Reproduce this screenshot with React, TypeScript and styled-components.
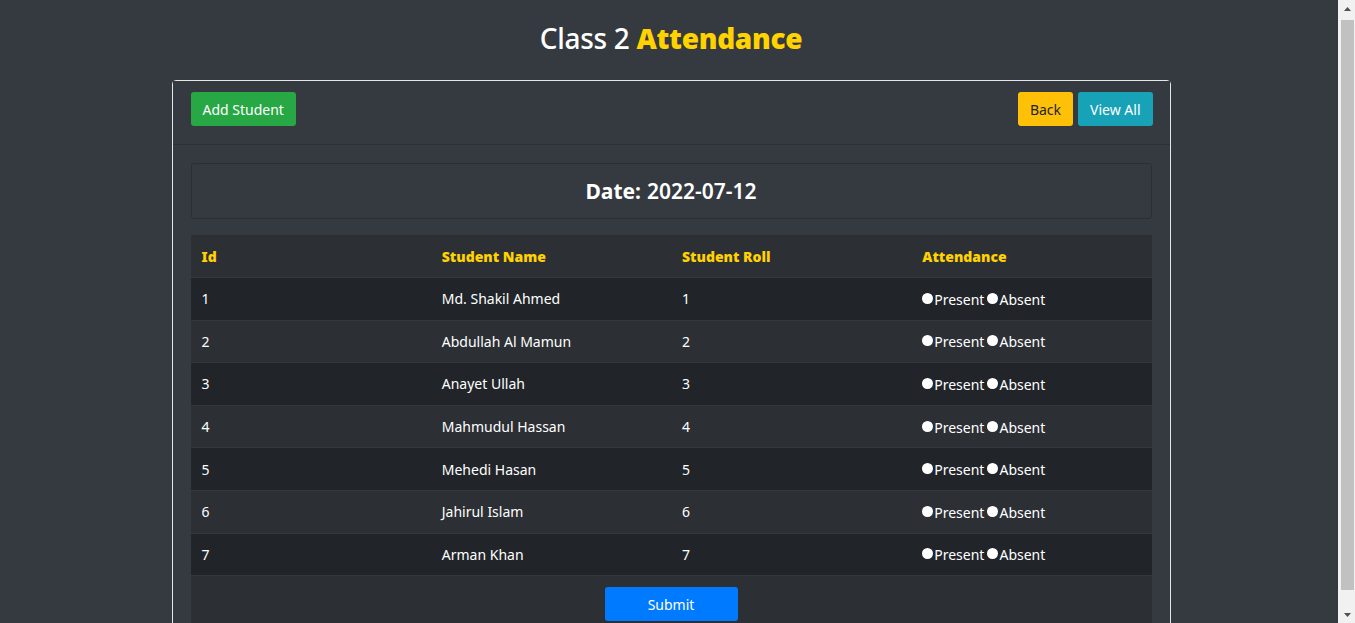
import React from "react";
import styled, { createGlobalStyle } from "styled-components";

const GlobalStyle = createGlobalStyle`
  html, body { margin: 0; padding: 0; background: #343a40; }
  body {
    font-family: "Segoe UI", "Noto Sans", "Open Sans", sans-serif;
    color: #ffffff;
    font-size: 14px;
  }
`;

const Page = styled.div`
  padding: 0 17px 22px 4px;
`;

const ScrollBar = styled.div`
  position: fixed;
  top: 0;
  right: 0;
  width: 17px;
  height: 100vh;
  background: #f1f1f1;
  display: flex;
  flex-direction: column;
  align-items: stretch;
`;

const ScrollArrow = styled.div`
  height: 17px;
  display: flex;
  align-items: center;
  justify-content: center;
  padding-left: 2px;
`;

const ScrollThumb = styled.div`
  flex: 1;
  margin: 3px 1px 16px 3px;
  background: #c1c1c1;
`;

const Title = styled.h1`
  margin: 0;
  height: 80px;
  line-height: 77px;
  text-align: center;
  font-size: 28px;
  font-weight: 500;
  letter-spacing: -0.3px;
`;

const Accent = styled.span`
  color: #ffd200;
  font-weight: 900;
`;

const Card = styled.div`
  width: 997px;
  margin: 0 auto;
  border: 1px solid #e4e6e8;
  border-radius: 4px;
  background: #343a40;
`;

const CardHeader = styled.div`
  display: flex;
  align-items: flex-start;
  justify-content: space-between;
  height: 52px;
  padding: 11px 17px 0 18px;
  border-bottom: 1px solid #2b3036;
  background: #353a41;
`;

const ButtonGroup = styled.div`
  display: flex;
  gap: 5px;
`;

const Button = styled.button<{ $bg: string; $fg?: string; $w?: number }>`
  height: 34px;
  padding: 0 12px;
  ${(p) => (p.$w ? `width: ${p.$w}px;` : "")}
  border: none;
  border-radius: 3px;
  background: ${(p) => p.$bg};
  color: ${(p) => p.$fg || "#ffffff"};
  font-family: inherit;
  font-size: 14px;
  cursor: pointer;
`;

const CardBody = styled.div`
  padding: 18px;
  display: flex;
  flex-direction: column;
  gap: 16px;
`;

const DateBox = styled.div`
  height: 54px;
  border: 1px solid #2a2f34;
  border-radius: 3px;
  display: flex;
  align-items: center;
  justify-content: center;
  font-size: 21px;
  font-weight: 600;
`;

const DateLabel = styled.span`
  font-weight: 700;
  margin-right: 6px;
`;

const Table = styled.table`
  width: 100%;
  border-collapse: collapse;
  table-layout: fixed;
`;

const HeadCell = styled.th`
  height: 42px;
  padding: 0 11px;
  text-align: left;
  color: #ffd200;
  font-weight: 900;
  font-size: 14px;
  background: #2c3035;
`;

const Row = styled.tr<{ $odd: boolean }>`
  background: ${(p) => (p.$odd ? "#212529" : "#2c3035")};
  border-top: 1px solid #32383e;
`;

const Cell = styled.td`
  height: 41.6px;
  padding: 0 11px;
  font-size: 14px;
  color: #ffffff;
`;

const SubmitCell = styled.td`
  padding: 11px 0;
  text-align: center;
  background: #2c3035;
  border-top: 1px solid #32383e;
`;

const RadioLabel = styled.label`
  display: inline-flex;
  align-items: center;
  margin-right: 3px;
`;

const Radio = styled.input`
  appearance: none;
  width: 11px;
  height: 11px;
  margin: 0 1px 2px 0;
  border-radius: 50%;
  background: #ffffff;
  border: none;
`;

const students = [
  { id: 1, name: "Md. Shakil Ahmed", roll: 1 },
  { id: 2, name: "Abdullah Al Mamun", roll: 2 },
  { id: 3, name: "Anayet Ullah", roll: 3 },
  { id: 4, name: "Mahmudul Hassan", roll: 4 },
  { id: 5, name: "Mehedi Hasan", roll: 5 },
  { id: 6, name: "Jahirul Islam", roll: 6 },
  { id: 7, name: "Arman Khan", roll: 7 },
];

export default function App() {
  return (
    <>
      <GlobalStyle />
      <Page>
        <Title>
          Class 2 <Accent>Attendance</Accent>
        </Title>
        <Card>
          <CardHeader>
            <Button $bg="#28a745">Add Student</Button>
            <ButtonGroup>
              <Button $bg="#ffc107" $fg="#212529">Back</Button>
              <Button $bg="#17a2b8">View All</Button>
            </ButtonGroup>
          </CardHeader>
          <CardBody>
            <DateBox>
              <DateLabel>Date:</DateLabel>2022-07-12
            </DateBox>
            <Table>
              <thead>
                <tr>
                  <HeadCell>Id</HeadCell>
                  <HeadCell>Student Name</HeadCell>
                  <HeadCell>Student Roll</HeadCell>
                  <HeadCell>Attendance</HeadCell>
                </tr>
              </thead>
              <tbody>
                {students.map((s, i) => (
                  <Row key={s.id} $odd={i % 2 === 0}>
                    <Cell>{s.id}</Cell>
                    <Cell>{s.name}</Cell>
                    <Cell>{s.roll}</Cell>
                    <Cell>
                      <RadioLabel>
                        <Radio type="radio" name={`att-${s.id}`} value="present" />
                        Present
                      </RadioLabel>
                      <RadioLabel>
                        <Radio type="radio" name={`att-${s.id}`} value="absent" />
                        Absent
                      </RadioLabel>
                    </Cell>
                  </Row>
                ))}
                <tr>
                  <SubmitCell colSpan={4}>
                    <Button $bg="#007bff" $w={133}>Submit</Button>
                  </SubmitCell>
                </tr>
              </tbody>
            </Table>
          </CardBody>
        </Card>
      </Page>
      <ScrollBar>
        <ScrollArrow>
          <svg width="7" height="4" viewBox="0 0 7 4">
            <path d="M0 4 L3.5 0 L7 4 Z" fill="#505050" />
          </svg>
        </ScrollArrow>
        <ScrollThumb />
        <ScrollArrow>
          <svg width="7" height="4" viewBox="0 0 7 4">
            <path d="M0 0 L3.5 4 L7 0 Z" fill="#505050" />
          </svg>
        </ScrollArrow>
      </ScrollBar>
    </>
  );
}
